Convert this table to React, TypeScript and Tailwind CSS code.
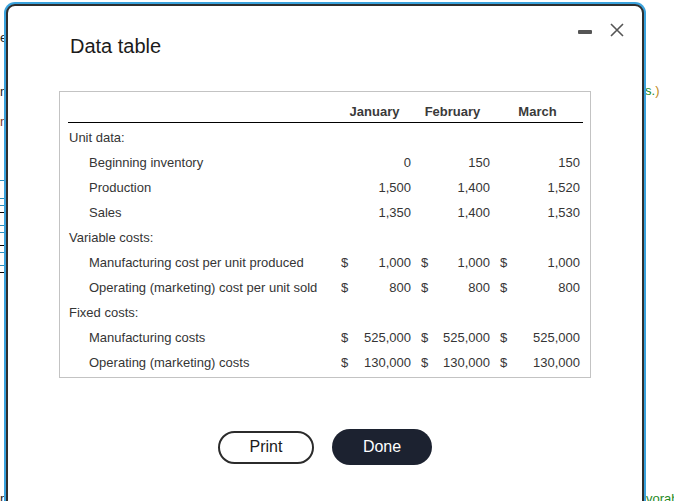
import React from "react";

type Row = {
  label: string;
  section?: boolean;
  dollar?: boolean;
  values?: string[];
};

const rows: Row[] = [
  { label: "Unit data:", section: true },
  { label: "Beginning inventory", values: ["0", "150", "150"] },
  { label: "Production", values: ["1,500", "1,400", "1,520"] },
  { label: "Sales", values: ["1,350", "1,400", "1,530"] },
  { label: "Variable costs:", section: true },
  { label: "Manufacturing cost per unit produced", values: ["1,000", "1,000", "1,000"], dollar: true },
  { label: "Operating (marketing) cost per unit sold", values: ["800", "800", "800"], dollar: true },
  { label: "Fixed costs:", section: true },
  { label: "Manufacturing costs", values: ["525,000", "525,000", "525,000"], dollar: true },
  { label: "Operating (marketing) costs", values: ["130,000", "130,000", "130,000"], dollar: true },
];

const months = ["January", "February", "March"];

// padding of each month column so the $ and the figures land where they should
const cellPad = ["pl-[5px] pr-[2px]", "pl-[8px] pr-[2px]", "pl-[8px] pr-[3px]"];

const DataTable: React.FC = () => (
  <div className="ml-[51px] mt-[33px] w-[532px] border border-[#c3c3c3] pl-[8px] pr-[7px] pt-[6px] pb-[2px]">
    <div className="grid grid-cols-[268px_77px_79px_91px] border-b border-black">
      <div />
      {months.map((m) => (
        <div key={m} className="h-[24px] pt-[3px] text-center text-[13px] leading-[21px] font-bold text-[#3a3a3a]">
          {m}
        </div>
      ))}
    </div>
    <div className="mt-[2px] grid grid-cols-[268px_77px_79px_91px] text-[13px] leading-[25px] text-[#353535]">
      {rows.map((r) => (
        <React.Fragment key={r.label}>
          <div className={r.section ? "pl-[1px] whitespace-nowrap" : "pl-[21px] whitespace-nowrap"}>{r.label}</div>
          {[0, 1, 2].map((i) => (
            <div
              key={i}
              className={`flex h-[25px] ${r.dollar ? "justify-between" : "justify-end"} ${cellPad[i]}`}
            >
              {r.dollar && <span>$</span>}
              {r.values && <span>{r.values[i]}</span>}
            </div>
          ))}
        </React.Fragment>
      ))}
    </div>
  </div>
);

export default function App() {
  return (
    <div className="relative h-[501px] w-[674px] overflow-hidden bg-white font-['Liberation_Sans',Arial,sans-serif]">
      {/* page underneath the dialog */}
      <div className="absolute left-0 top-[28px] text-[13px] text-[#222]">e</div>
      <div className="absolute left-0 top-[82px] text-[13px] text-[#222]">m</div>
      <div className="absolute left-0 top-[112px] text-[13px] text-[#7a3a2a]">n</div>
      <div className="absolute left-0 top-[180px] flex w-[10px] flex-col">
        <div className="h-[1px] bg-[#2a8fbf]" />
        <div className="mt-[17px] h-[1px] bg-[#2a8fbf]" />
        <div className="mt-[6px] h-[1px] bg-[#2a8fbf]" />
        <div className="mt-[6px] h-[1px] bg-black" />
        <div className="mt-[12px] h-[1px] bg-[#2a8fbf]" />
        <div className="mt-[6px] h-[1px] bg-[#2a8fbf]" />
        <div className="mt-[12px] h-[1px] bg-black" />
        <div className="mt-[6px] h-[1px] bg-[#2a8fbf]" />
        <div className="mt-[12px] h-[1px] bg-[#2a8fbf]" />
        <div className="mt-[6px] h-[1px] bg-black" />
      </div>
      <div className="absolute left-[645px] top-[81px] text-[13px]">
        <span className="text-[#1f8a1f]">s.</span>
        <span className="text-[#c08a20]">)</span>
      </div>
      <div className="absolute left-[646px] top-[489px] text-[13px] text-[#1f8a1f]">vorab</div>
      <div className="absolute left-0 top-[489px] text-[13px] text-[#222]">n</div>

      {/* dialog */}
      <div className="absolute left-[6px] top-[4px] flex h-[510px] w-[638px] flex-col rounded-[9px] border-2 border-[#2e2e2e] bg-white shadow-[0_0_0_2px_#3aa2dc]">
        <div className="flex h-[52px] items-start justify-between pl-[62px] pr-[18px]">
          <h2 className="pt-[28px] text-[20px] leading-[24px] text-[#1b1b1b]">Data table</h2>
          <div className="mt-[17px] flex items-start gap-[18px]">
            <div className="mt-[7px] h-[4px] w-[14px] rounded-[1px] bg-[#555]" />
            <svg width="14" height="14" viewBox="0 0 14 14" className="text-[#555]">
              <path d="M1 1 L13 13 M13 1 L1 13" stroke="currentColor" strokeWidth="1.6" fill="none" />
            </svg>
          </div>
        </div>

        <DataTable />

        <div className="mt-[51px] flex items-center justify-center gap-[18px]">
          <button className="h-[33px] w-[96px] rounded-full border-2 border-[#2b2b2b] bg-white text-[16px] text-[#1b1b1b]">
            Print
          </button>
          <button className="h-[36px] w-[100px] rounded-full bg-[#1c2230] text-[16px] text-white">
            Done
          </button>
        </div>
      </div>
    </div>
  );
}
